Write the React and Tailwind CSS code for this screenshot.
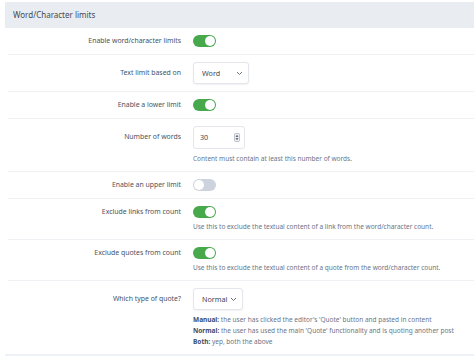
import React from "react";

const font = { fontFamily: '"Noto Sans", "Open Sans", sans-serif' };

function Toggle({ on }) {
  return (
    <div
      className={`relative h-[12px] w-[23px] rounded-full ${on ? "bg-[#47a94c]" : "bg-[#cdd3dd]"}`}
    >
      <div
        className={`absolute top-[1px] h-[10px] w-[10px] rounded-full bg-white ${on ? "right-[1px]" : "left-[1px]"}`}
      />
    </div>
  );
}

function Select({ value, width }) {
  return (
    <div
      className={`flex h-[22px] ${width} items-center justify-between rounded-[3px] border border-[#e3e6ea] bg-white pl-[8px] pr-[5px] text-[7.2px] text-[#3e4756] shadow-[0_1px_2px_rgba(0,0,0,0.06)]`}
    >
      <span>{value}</span>
      <svg width="7" height="5" viewBox="0 0 7 5" fill="none">
        <path d="M1 1l2.5 2.5L6 1" stroke="#6b7280" strokeWidth="1" />
      </svg>
    </div>
  );
}

function NumberInput({ value }) {
  return (
    <div className="flex h-[23px] w-[52px] items-center justify-between rounded-[3px] border border-[#e3e6ea] bg-white pl-[6px] pr-[4px] text-[7.2px] text-[#3e4756]">
      <span>{value}</span>
      <svg width="6" height="9" viewBox="0 0 6 9">
        <rect x="0.5" y="0.5" width="5" height="8" rx="1" fill="#eceef1" stroke="#9aa1ab" strokeWidth="0.6" />
        <path d="M1.5 3.7L3 2l1.5 1.7z" fill="#3e4756" />
        <path d="M1.5 5.3L3 7l1.5-1.7z" fill="#3e4756" />
      </svg>
    </div>
  );
}

function RowC({ label, h, control, help, helpMt = "mt-[4px]", last }) {
  return (
    <div className={`ml-[3px] flex py-[7px] pr-[8px] ${last ? "" : "border-b border-[#eff1f4]"}`}>
      <div className="w-[173px] shrink-0 text-right text-[6.9px] text-[#4a5361]">
        <div className={`flex ${h} items-center justify-end`}>{label}</div>
      </div>
      <div className="ml-[12px] flex flex-col">
        <div className={`flex ${h} items-center`}>{control}</div>
        {help && (
          <div className={`${helpMt} text-[6.5px] leading-[11px] text-[#6b7587]`}>{help}</div>
        )}
      </div>
    </div>
  );
}

export default function App() {
  return (
    <div className="h-[356px] w-[474px] overflow-hidden bg-white pt-[2px]" style={font}>
      <div className="ml-[5px]">
        <div className="flex h-[26px] items-center bg-[#e9edf1] pl-[8px] text-[8px] text-[#3f4957]">
          Word/Character limits
        </div>
        <div className="bg-white">
          <RowC label="Enable word/character limits" h="h-[12px]" control={<Toggle on />} />
          <RowC label="Text limit based on" h="h-[22px]" control={<Select value="Word" width="w-[56px]" />} />
          <RowC label="Enable a lower limit" h="h-[12px]" control={<Toggle on />} />
          <RowC
            label="Number of words"
            h="h-[23px]"
            control={<NumberInput value="30" />}
            help="Content must contain at least this number of words."
          />
          <RowC label="Enable an upper limit" h="h-[12px]" control={<Toggle on={false} />} />
          <RowC
            label="Exclude links from count"
            h="h-[12px]"
            control={<Toggle on />}
            helpMt="mt-[3px]"
            help="Use this to exclude the textual content of a link from the word/character count."
          />
          <RowC
            label="Exclude quotes from count"
            h="h-[12px]"
            control={<Toggle on />}
            helpMt="mt-[3px]"
            help="Use this to exclude the textual content of a quote from the word/character count."
          />
          <RowC
            label="Which type of quote?"
            h="h-[22px]"
            control={<Select value="Normal" width="w-[50px]" />}
            last
            help={
              <>
                <div>
                  <span className="font-bold text-[#3d4a66]">Manual:</span> the user has clicked the editor's 'Quote' button and pasted in content
                </div>
                <div>
                  <span className="font-bold text-[#3d4a66]">Normal:</span> the user has used the main 'Quote' functionality and is quoting another post
                </div>
                <div>
                  <span className="font-bold text-[#3d4a66]">Both:</span> yep, both the above
                </div>
              </>
            }
          />
        </div>
        <div className="h-[20px] bg-[#eef1f6]" />
      </div>
    </div>
  );
}
